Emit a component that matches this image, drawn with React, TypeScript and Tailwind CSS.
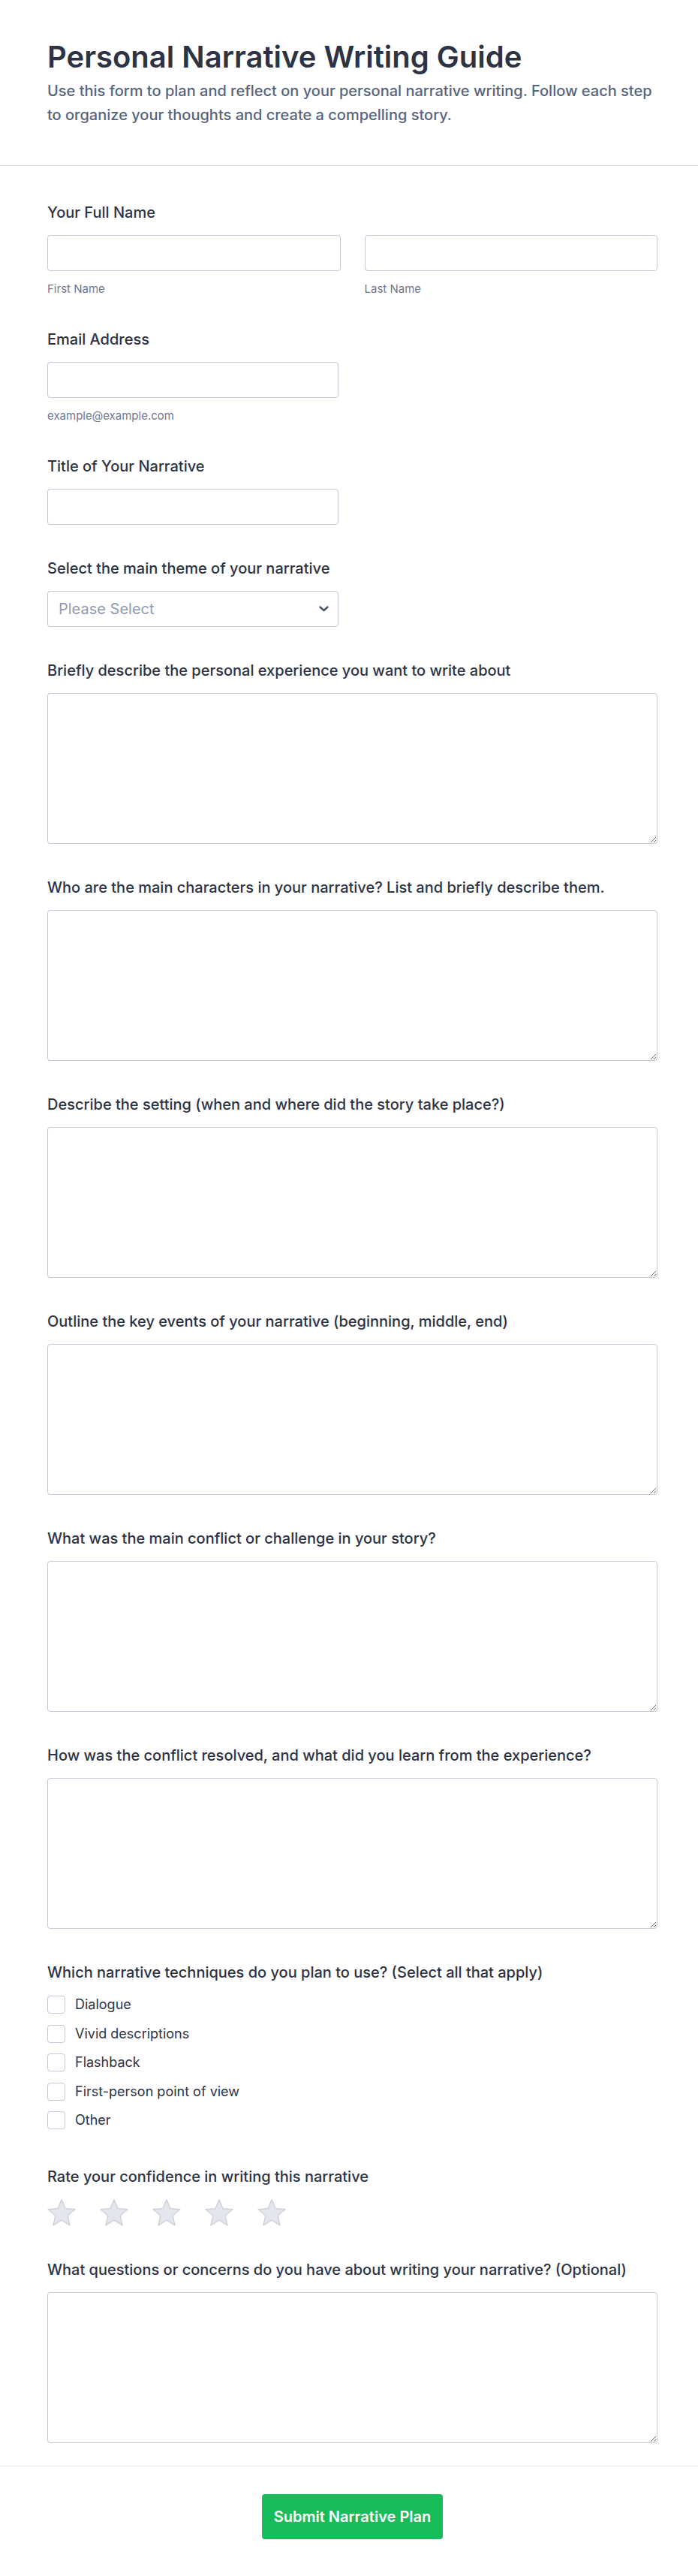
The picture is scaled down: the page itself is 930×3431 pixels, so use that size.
import React from 'react';

// shared field styles
const LABEL = 'block text-[20px] leading-[28px] font-medium text-[#2c3345]';
const INPUT =
  'block w-full h-[48px] rounded-[4px] border border-[#c3cad8] bg-white px-[14px] text-[20px] text-[#2c3345] outline-none';
const TEXTAREA =
  'block w-full h-[201px] rounded-[4px] border border-[#c3cad8] bg-white px-[14px] py-[10px] text-[20px] text-[#2c3345] outline-none';
const SUBLABEL = 'mt-[14px] text-[15px] leading-[19px] text-[#6f7891]';

const textQuestions = [
  'Briefly describe the personal experience you want to write about',
  'Who are the main characters in your narrative? List and briefly describe them.',
  'Describe the setting (when and where did the story take place?)',
  'Outline the key events of your narrative (beginning, middle, end)',
  'What was the main conflict or challenge in your story?',
  'How was the conflict resolved, and what did you learn from the experience?',
];

const techniques = ['Dialogue', 'Vivid descriptions', 'Flashback', 'First-person point of view', 'Other'];

const Star: React.FC = () => (
  <svg width="38" height="36" viewBox="0 0 38 36" className="block">
    <polygon
      points="19,0.8 24.03,12.58 37.07,13.63 27.13,22.14 30.17,34.87 19,28.05 7.83,34.87 10.87,22.14 0.93,13.63 13.97,12.58"
      fill="#e4e6ee"
      stroke="#c9cdd9"
      strokeWidth="1.2"
      strokeLinejoin="round"
    />
  </svg>
);

export default function App() {
  return (
    <div className="w-[930px] bg-white font-['Inter','Noto_Sans',sans-serif] text-[#2c3345]">
      {/* Header */}
      <header className="border-b border-[#dde0e9] pl-[63px] pr-[54px] pt-[52px] pb-[51px]">
        <h1 className="text-[40px] leading-[48px] font-semibold text-[#2c3345]">Personal Narrative Writing Guide</h1>
        <p className="mt-[5px] text-[20px] leading-[32px] font-medium text-[#57647e]">
          Use this form to plan and reflect on your personal narrative writing. Follow each step to organize your
          thoughts and create a compelling story.
        </p>
      </header>

      {/* Form body */}
      <form className="border-b border-[#e6e8ef] pl-[63px] pr-[54px] pt-[48px] pb-[30px] flex flex-col gap-[44px]">
        <div>
          <label className={LABEL}>Your Full Name</label>
          <div className="mt-4 grid grid-cols-2 gap-8">
            <div>
              <input className={INPUT} />
              <div className={SUBLABEL}>First Name</div>
            </div>
            <div>
              <input className={INPUT} />
              <div className={SUBLABEL}>Last Name</div>
            </div>
          </div>
        </div>

        <div>
          <label className={LABEL}>Email Address</label>
          <div className="mt-4 w-[388px]">
            <input type="email" className={INPUT} />
            <div className={SUBLABEL}>example@example.com</div>
          </div>
        </div>

        <div>
          <label className={LABEL}>Title of Your Narrative</label>
          <div className="mt-4 w-[388px]">
            <input className={INPUT} />
          </div>
        </div>

        <div>
          <label className={LABEL}>Select the main theme of your narrative</label>
          <div className="relative mt-4 w-[388px]">
            <select
              defaultValue=""
              className="block w-full h-[48px] appearance-none rounded-[4px] border border-[#c3cad8] bg-white pl-[14px] pr-[36px] text-[20px] text-[#8f9bb3] outline-none"
            >
              <option value="">Please Select</option>
              <option>Overcoming a challenge</option>
              <option>A memorable journey</option>
              <option>A life lesson</option>
            </select>
            <svg
              width="13"
              height="8"
              viewBox="0 0 13 8"
              className="pointer-events-none absolute right-[13px] top-[20px]"
            >
              <path d="M1.5 1.5 L6.5 6 L11.5 1.5" fill="none" stroke="#4a5470" strokeWidth="2.4" strokeLinecap="round" strokeLinejoin="round" />
            </svg>
          </div>
        </div>

        {textQuestions.map(q => (
          <div key={q}>
            <label className={LABEL}>{q}</label>
            <textarea className={`mt-4 ${TEXTAREA}`} />
          </div>
        ))}

        <div className="mb-[5px]">
          <label className={LABEL}>Which narrative techniques do you plan to use? (Select all that apply)</label>
          <div className="mt-[17px] flex flex-col gap-[14.5px]">
            {techniques.map(t => (
              <label key={t} className="flex items-center gap-[13px]">
                <input
                  type="checkbox"
                  className="m-0 block h-[24px] w-[24px] shrink-0 appearance-none rounded-[4px] border border-[#c3cad8] bg-white"
                />
                <span className="text-[18px] leading-[24px] text-[#2c3345]">{t}</span>
              </label>
            ))}
          </div>
        </div>

        <div>
          <label className={LABEL}>Rate your confidence in writing this narrative</label>
          <div className="mt-4 flex gap-[32px]">
            {[1, 2, 3, 4, 5].map(i => (
              <Star key={i} />
            ))}
          </div>
        </div>

        <div>
          <label className={LABEL}>What questions or concerns do you have about writing your narrative? (Optional)</label>
          <textarea className={`mt-4 ${TEXTAREA}`} />
        </div>
      </form>

      {/* Footer */}
      <div className="flex justify-center pl-[63px] pr-[54px] pt-[37px] pb-[49px]">
        <button
          type="button"
          className="h-[60px] rounded-[4px] bg-[#18bd5b] px-4 text-[20px] font-semibold text-white"
        >
          Submit Narrative Plan
        </button>
      </div>
    </div>
  );
}
